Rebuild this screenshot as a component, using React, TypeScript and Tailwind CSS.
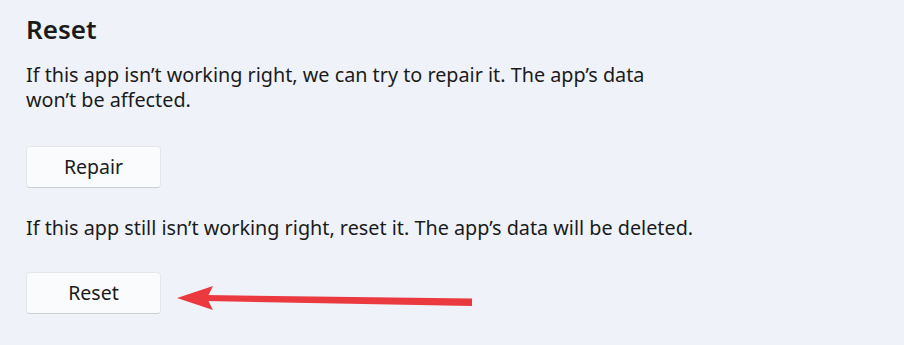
import React from 'react';

const SettingsButton: React.FC<{ label: string }> = ({ label }) => (
    <button className="w-[135px] h-[42px] rounded-[4px] bg-[#fafbfc] border border-[#e4e6e9] border-b-[#cdd0d3] text-[19.5px] text-[#1b1b1b] leading-none">
        {label}
    </button>
);

const App: React.FC = () => {
    return (
        <div className="w-[904px] h-[345px] bg-[#eff3f9] px-[26px] pt-[12px] font-['Noto_Sans',sans-serif] text-[#1b1b1b] overflow-hidden">
            <h2 className="text-[26px] font-semibold leading-[34px]">Reset</h2>
            <p className="mt-[16px] w-[660px] text-[19.8px] leading-[25px]">
                If this app isn’t working right, we can try to repair it. The app’s data won’t be affected.
            </p>
            <div className="mt-[34px] flex">
                <SettingsButton label="Repair" />
            </div>
            <p className="mt-[27px] text-[19.8px] leading-[25px]">
                If this app still isn’t working right, reset it. The app’s data will be deleted.
            </p>
            <div className="relative mt-[32px] flex">
                <SettingsButton label="Reset" />
                <svg className="absolute left-[144px] top-[8px]" width="310" height="36" viewBox="0 0 310 36">
                    <path d="M36 15 L302 18.5 L302 26 L36 21 Z" fill="#ea3a40" />
                    <path d="M7 18 L43 6 L37 18 L43 30 Z" fill="#ea3a40" />
                </svg>
            </div>
        </div>
    );
};

export default App;
